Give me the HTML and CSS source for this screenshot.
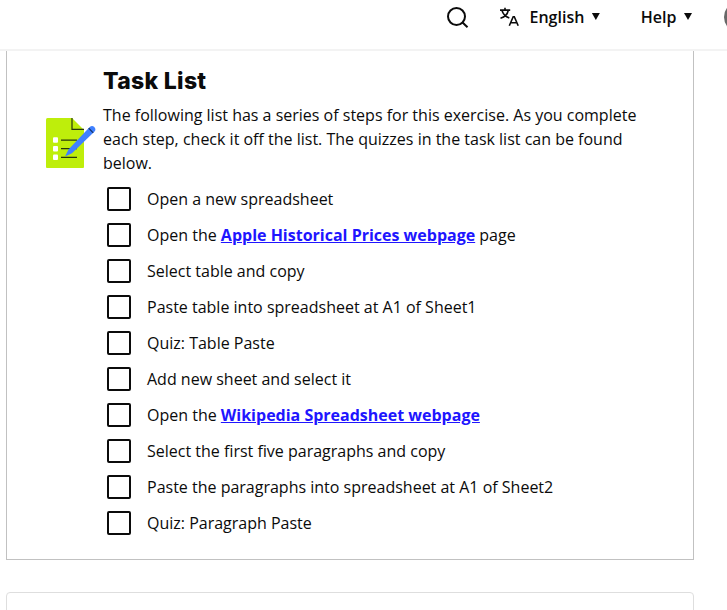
FILE: index.html
```html
<!DOCTYPE html>
<html lang="en">
<head>
<meta charset="utf-8">
<title>Task List</title>
<link rel="stylesheet" href="styles.css">
</head>
<body>
<header class="topbar">
  <svg class="search" width="24" height="24" viewBox="0 0 24 24" fill="none" stroke="#0b0b0b" stroke-width="2"><circle cx="11.500" cy="10.500" r="8.500"/><path d="M17.300 16.300L22.500 21.300"/></svg>
  <div class="menu language">
    <svg class="translate" width="20" height="20" viewBox="0 0 20 20" fill="none" stroke="#0b0b0b" stroke-width="1.600"><path d="M1 3.100H11.200M6 .800V3M3 3.500C4 7 6.500 9.700 10.300 11M9.200 3.500C8.500 7.500 5.500 10 1.500 11.300M10.300 18.800L14.200 9.800H15.300L19.200 18.800M11.700 15.800H17.800"/></svg>
    <span class="label">English</span><span class="caret"></span>
  </div>
  <div class="menu help"><span class="label">Help</span><span class="caret"></span></div>
  <div class="avatar"></div>
</header>
<main>
  <section class="card">
    <svg class="note" width="52" height="52" viewBox="0 0 52 52"><path fill="#beee0b" d="M1.500 1H26L38 13V50Q38 51 37 51H1Q0 51 0 50V2.500Q0 1 1.500 1Z"/><path d="M26 1V12.300H38" fill="none" stroke="#27370b" stroke-width="1.200"/><path d="M15 23.200H31M15 31.700H31M15 40.300H31" stroke="#27370b" stroke-width="1.300"/><g fill="#fff"><rect x="7" y="20.300" width="5" height="5.500" rx="1"/><rect x="7" y="29" width="5" height="5.500" rx="1"/><rect x="7" y="37.500" width="5" height="5.500" rx="1"/></g><path fill="#3f80ff" d="M19 39.500L22.500 32.500L43.500 10.200Q46 7.800 48.300 10Q50.500 12.500 48.300 14.800L26 36.300Z"/><path d="M42.700 11.200L47.200 15.800" stroke="#16305f" stroke-width="1.200"/></svg>
    <div class="content">
      <h2>Task List</h2>
      <p>The following list has a series of steps for this exercise. As you complete each step, check it off the list. The quizzes in the task list can be found below.</p>
      <ul>
        <li><span class="box"></span><span>Open a new spreadsheet</span></li>
        <li><span class="box"></span><span>Open the <a href="#">Apple Historical Prices webpage</a> page</span></li>
        <li><span class="box"></span><span>Select table and copy</span></li>
        <li><span class="box"></span><span>Paste table into spreadsheet at A1 of Sheet1</span></li>
        <li><span class="box"></span><span>Quiz: Table Paste</span></li>
        <li><span class="box"></span><span>Add new sheet and select it</span></li>
        <li><span class="box"></span><span>Open the <a href="#">Wikipedia Spreadsheet webpage</a></span></li>
        <li><span class="box"></span><span>Select the first five paragraphs and copy</span></li>
        <li><span class="box"></span><span>Paste the paragraphs into spreadsheet at A1 of Sheet2</span></li>
        <li><span class="box"></span><span>Quiz: Paragraph Paste</span></li>
      </ul>
    </div>
  </section>
  <section class="next-card"></section>
</main>
</body>
</html>
```
FILE: styles.css
```css
* { box-sizing: border-box; }
body {
  margin: 0;
  height: 610px;
  overflow: hidden;
  background: #fff;
  color: #0b0b0b;
  font: 16px/24px "Open Sans", sans-serif;
}
.topbar {
  display: flex;
  height: 51px;
  padding-left: 445px;
  border-bottom: 2px solid #f3f3f3;
}
.search { flex: none; margin-top: 6px; }
.menu {
  display: flex;
  flex: none;
  height: 24px;
  margin-top: 5px;
  font-weight: 600;
}
.language { margin-left: 30px; }
.help { margin-left: 41px; }
.translate { flex: none; margin: 2px 10.5px 0 0; }
.caret {
  width: 8px;
  height: 7px;
  margin: 8px 0 0 7.5px;
  background: #0b0b0b;
  clip-path: polygon(0 0, 100% 0, 50% 100%);
}
.avatar {
  flex: none;
  width: 32px;
  height: 32px;
  margin: 1px 0 0 32px;
  border-radius: 50%;
  background: #686868;
}
main { padding-left: 6px; }
.card {
  display: flex;
  width: 688px;
  height: 509px;
  padding-left: 39px;
  border: 1px solid #c1c1c1;
  border-top: 0;
}
.note { flex: none; margin-top: 66px; }
.content { width: 550px; margin-left: 5px; }
h2 {
  margin: 15px 0 7px;
  font: 800 23px/30px Inter, sans-serif;
  letter-spacing: 0.3px;
}
p { margin: 0 0 6px; }
ul { margin: 0; padding: 0 0 0 4px; list-style: none; }
li { display: flex; height: 36px; padding-top: 6px; }
.box {
  width: 24px;
  height: 24px;
  margin-right: 16px;
  border: 2px solid #0b0b0b;
  border-radius: 2px;
}
a { color: #2015ff; font-weight: 700; text-decoration: underline; }
.next-card {
  width: 688px;
  height: 40px;
  margin-top: 32px;
  border: 1px solid #dedede;
  border-radius: 4px;
}
```
